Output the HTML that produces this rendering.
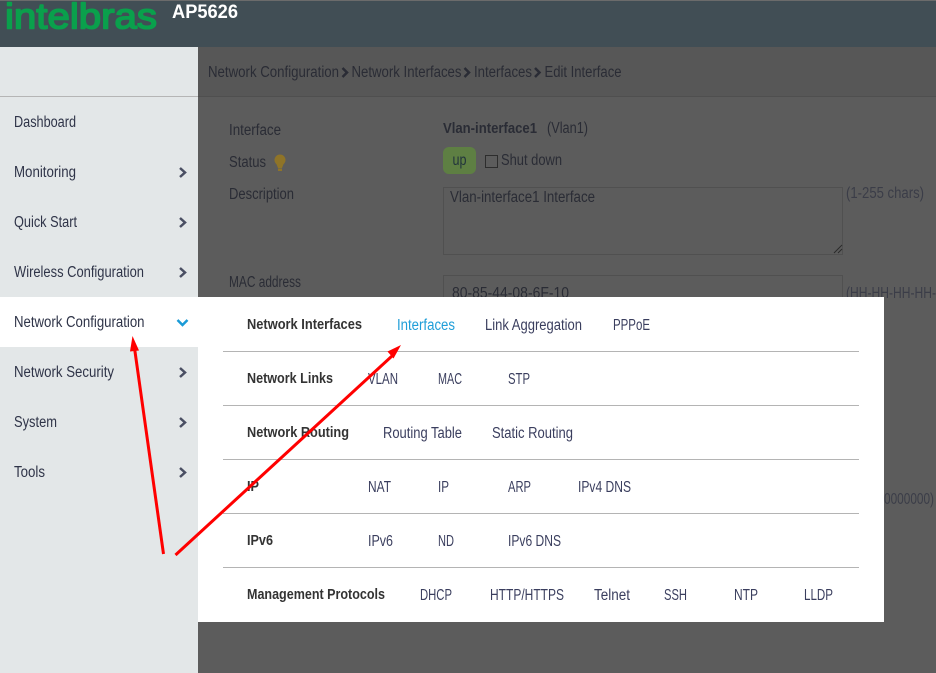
<!DOCTYPE html>
<html><head><meta charset="utf-8"><title>AP5626</title>
<style>
html,body{margin:0;padding:0;width:936px;height:673px;overflow:hidden;background:#5c5c5c}
svg{display:block}
text{font-family:"Liberation Sans",sans-serif;font-size:15.5px;fill:#3a3e5e}
.s text{fill:#2f3448}
.d text{fill:#2a2c35}
.b text{font-weight:bold;fill:#333;font-size:14.5px}
.l{fill:none;stroke:#b4b4b4;stroke-width:1}
</style></head><body>
<svg width="936" height="673" viewBox="0 0 936 673" xmlns="http://www.w3.org/2000/svg">
<rect width="936" height="673" fill="#5c5c5c"/>
<rect width="936" height="47" fill="#414e55"/>
<rect width="936" height="1" fill="#6b6b6b"/>
<text x="5" y="28.500" textLength="152" lengthAdjust="spacingAndGlyphs" style="font-size:36px;fill:#0aa04c;stroke:#0aa04c;stroke-width:1.600;stroke-linejoin:round">intelbras</text>
<text x="172" y="18" textLength="66" lengthAdjust="spacingAndGlyphs" style="font-size:19.500px;font-weight:bold;fill:#fff">AP5626</text>

<rect x="198" y="47" width="738" height="49" fill="#575757"/>
<rect x="198" y="96" width="738" height="1" fill="#4f4f4f"/>
<g class="d">
<text x="208" y="77" textLength="131" lengthAdjust="spacingAndGlyphs">Network Configuration</text>
<text x="351.500" y="77" textLength="110" lengthAdjust="spacingAndGlyphs">Network Interfaces</text>
<text x="474" y="77" textLength="58" lengthAdjust="spacingAndGlyphs">Interfaces</text>
<text x="544.500" y="77" textLength="77" lengthAdjust="spacingAndGlyphs">Edit Interface</text>
</g>
<path d="M342.500 68l4.500 4.500-4.500 4.500M464.500 68l4.500 4.500-4.500 4.500M535 68l4.500 4.500-4.500 4.500" fill="none" stroke="#2a2c35" stroke-width="2.500"/>

<g class="d">
<text x="229" y="135" textLength="52" lengthAdjust="spacingAndGlyphs">Interface</text>
<text x="229" y="167" textLength="37" lengthAdjust="spacingAndGlyphs">Status</text>
<text x="229" y="199" textLength="65" lengthAdjust="spacingAndGlyphs">Description</text>
<text x="229" y="287" textLength="72" lengthAdjust="spacingAndGlyphs">MAC address</text>
<text x="443" y="133" textLength="94" lengthAdjust="spacingAndGlyphs" style="font-weight:bold;font-size:14.500px">Vlan-interface1</text>
<text x="547" y="133" textLength="41" lengthAdjust="spacingAndGlyphs">(Vlan1)</text>
<text x="501" y="165" textLength="61" lengthAdjust="spacingAndGlyphs">Shut down</text>
<text x="450" y="202" textLength="145" lengthAdjust="spacingAndGlyphs">Vlan-interface1 Interface</text>
<text x="452" y="298" textLength="117" lengthAdjust="spacingAndGlyphs">80-85-44-08-6F-10</text>
</g>
<text x="846" y="198" textLength="78" lengthAdjust="spacingAndGlyphs" style="fill:#3b3d48">(1-255 chars)</text>
<text x="846" y="298" textLength="90" lengthAdjust="spacingAndGlyphs" style="fill:#3b3d48">(HH-HH-HH-HH-</text>
<text x="884" y="504" textLength="50" lengthAdjust="spacingAndGlyphs" style="fill:#3b3d48">0000000)</text>
<circle cx="280" cy="160" r="5.500" fill="#8f7428"/>
<path d="M276 163l2 5h4l2-5z" fill="#8f7428"/>
<rect x="278" y="168.500" width="4" height="2.500" fill="#8f7428"/>
<rect x="443" y="147" width="33" height="27" rx="6" fill="#5e7f43"/>
<text x="452.500" y="165" textLength="14" lengthAdjust="spacingAndGlyphs" style="fill:#22343c">up</text>
<rect x="485.500" y="155.500" width="12" height="12" fill="none" stroke="#2d2d2d"/>
<rect x="443.500" y="187.500" width="399" height="67" fill="none" stroke="#505050"/>
<path d="M834 253l8-8M838 253l4-4" stroke="#2a2a2a" stroke-width="1" fill="none"/>
<rect x="443.500" y="275.500" width="399" height="40" fill="none" stroke="#505050"/>

<rect y="47" width="198" height="626" fill="#e3e7e8"/>
<rect y="96" width="198" height="1" fill="#b5b5b5"/>
<rect y="297" width="198" height="50" fill="#fff"/>
<g class="s">
<text x="14" y="127" textLength="62" lengthAdjust="spacingAndGlyphs">Dashboard</text>
<text x="14" y="177" textLength="62" lengthAdjust="spacingAndGlyphs">Monitoring</text>
<text x="14" y="227" textLength="63" lengthAdjust="spacingAndGlyphs">Quick Start</text>
<text x="14" y="277" textLength="130" lengthAdjust="spacingAndGlyphs">Wireless Configuration</text>
<text x="14" y="327" textLength="130.500" lengthAdjust="spacingAndGlyphs">Network Configuration</text>
<text x="14" y="377" textLength="100" lengthAdjust="spacingAndGlyphs">Network Security</text>
<text x="14" y="427" textLength="43" lengthAdjust="spacingAndGlyphs">System</text>
<text x="14" y="477" textLength="31" lengthAdjust="spacingAndGlyphs">Tools</text>
</g>
<path d="M180 168l5 4.500-5 4.500M180 218l5 4.500-5 4.500M180 268l5 4.500-5 4.500M180 368l5 4.500-5 4.500M180 418l5 4.500-5 4.500M180 468l5 4.500-5 4.500" fill="none" stroke="#4a4f63" stroke-width="2.500"/>
<path d="M177.500 320l5 5 5-5" fill="none" stroke="#1a9bd7" stroke-width="2.500"/>

<rect x="198" y="297" width="686" height="325" fill="#fff"/>
<path class="l" d="M223 351.500H859M223 405.500H859M223 459.500H859M223 513.500H859M223 567.500H859"/>
<g class="b">
<text x="247" y="329" textLength="115" lengthAdjust="spacingAndGlyphs">Network Interfaces</text>
<text x="247" y="383" textLength="86" lengthAdjust="spacingAndGlyphs">Network Links</text>
<text x="247" y="437" textLength="102" lengthAdjust="spacingAndGlyphs">Network Routing</text>
<text x="247" y="491" textLength="12" lengthAdjust="spacingAndGlyphs">IP</text>
<text x="247" y="545" textLength="26" lengthAdjust="spacingAndGlyphs">IPv6</text>
<text x="247" y="599" textLength="138" lengthAdjust="spacingAndGlyphs">Management Protocols</text>
</g>
<text x="397" y="330" textLength="58" lengthAdjust="spacingAndGlyphs" style="fill:#1f9ed8">Interfaces</text>
<text x="485" y="330" textLength="97" lengthAdjust="spacingAndGlyphs">Link Aggregation</text>
<text x="613" y="330" textLength="37" lengthAdjust="spacingAndGlyphs">PPPoE</text>
<text x="368" y="384" textLength="30" lengthAdjust="spacingAndGlyphs">VLAN</text>
<text x="438" y="384" textLength="24" lengthAdjust="spacingAndGlyphs">MAC</text>
<text x="508" y="384" textLength="22" lengthAdjust="spacingAndGlyphs">STP</text>
<text x="383" y="438" textLength="79" lengthAdjust="spacingAndGlyphs">Routing Table</text>
<text x="492" y="438" textLength="81" lengthAdjust="spacingAndGlyphs">Static Routing</text>
<text x="368" y="492" textLength="23" lengthAdjust="spacingAndGlyphs">NAT</text>
<text x="438" y="492" textLength="11" lengthAdjust="spacingAndGlyphs">IP</text>
<text x="508" y="492" textLength="23" lengthAdjust="spacingAndGlyphs">ARP</text>
<text x="578" y="492" textLength="53" lengthAdjust="spacingAndGlyphs">IPv4 DNS</text>
<text x="368" y="546" textLength="25" lengthAdjust="spacingAndGlyphs">IPv6</text>
<text x="438" y="546" textLength="16" lengthAdjust="spacingAndGlyphs">ND</text>
<text x="508" y="546" textLength="53" lengthAdjust="spacingAndGlyphs">IPv6 DNS</text>
<text x="420" y="600" textLength="32" lengthAdjust="spacingAndGlyphs">DHCP</text>
<text x="490" y="600" textLength="74" lengthAdjust="spacingAndGlyphs">HTTP/HTTPS</text>
<text x="594" y="600" textLength="36" lengthAdjust="spacingAndGlyphs">Telnet</text>
<text x="664" y="600" textLength="23" lengthAdjust="spacingAndGlyphs">SSH</text>
<text x="734" y="600" textLength="24" lengthAdjust="spacingAndGlyphs">NTP</text>
<text x="804" y="600" textLength="29" lengthAdjust="spacingAndGlyphs">LLDP</text>

<path d="M163.500 554L134.500 348" fill="none" stroke="#f00" stroke-width="3"/>
<path d="M132.500 336l6.500 14.500-9 1z" fill="#f00"/>
<path d="M175.500 555L392 356" fill="none" stroke="#f00" stroke-width="3"/>
<path d="M401 345l-7.500 13.500-6-7z" fill="#f00"/>
</svg>
</body></html>
